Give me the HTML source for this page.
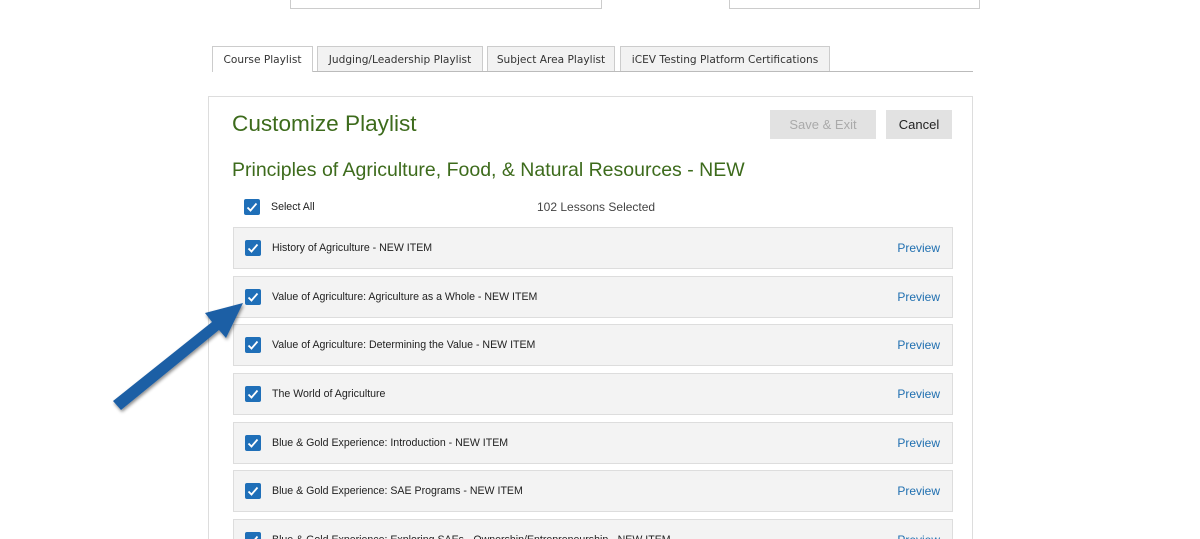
<!DOCTYPE html>
<html style="height:539px;overflow:hidden"><head><style>
body{margin:0;width:1200px;height:539px;overflow:hidden;background:#fff;font-family:"Liberation Sans",sans-serif;position:relative}
.a{position:absolute}
.tab{position:absolute;top:46px;height:25px;border:1px solid #ccc;border-bottom:none;background:#f2f2f2;font-family:"DejaVu Sans",sans-serif;font-size:10.6px;color:#333;line-height:26px;text-align:center;box-sizing:border-box}
.row{position:absolute;left:233px;width:720px;height:42px;background:#f3f3f3;border:1px solid #ddd;box-sizing:border-box}
.cb{position:absolute;left:11px;top:12px;width:16px;height:16px;background:#1f6fb8;border-radius:2px}
.row span{position:absolute;left:38px;top:14px;font-size:10.6px;color:#222}
.row b{position:absolute;right:12px;top:13px;font-weight:normal;font-size:12px;color:#1f6fb0}
</style></head><body>
<div class="a" style="left:290px;top:-2px;width:310px;height:9px;border:1px solid #ccc"></div>
<div class="a" style="left:729px;top:-2px;width:249px;height:9px;border:1px solid #ccc"></div>
<div class="a" style="left:212px;top:71px;width:761px;border-top:1px solid #bbb"></div>
<div class="tab" style="left:212px;width:101px;background:#fff;height:26px">Course Playlist</div>
<div class="tab" style="left:317px;width:166px">Judging/Leadership Playlist</div>
<div class="tab" style="left:487px;width:128px">Subject Area Playlist</div>
<div class="tab" style="left:620px;width:210px">iCEV Testing Platform Certifications</div>
<div class="a" style="left:208px;top:96px;width:765px;height:460px;border:1px solid #ddd;box-sizing:border-box"></div>
<div class="a" style="left:232px;top:111px;font-size:22.6px;color:#3d6b1c">Customize Playlist</div>
<div class="a" style="left:770px;top:110px;width:106px;height:29px;background:#e2e2e2;color:#aaa;font-size:13px;line-height:29px;text-align:center">Save &amp; Exit</div>
<div class="a" style="left:886px;top:110px;width:66px;height:29px;background:#e2e2e2;color:#222;font-size:13px;line-height:29px;text-align:center">Cancel</div>
<div class="a" style="left:232px;top:159px;font-size:19.5px;color:#3d6b1c">Principles of Agriculture, Food, &amp; Natural Resources - NEW</div>
<div class="a" style="left:244px;top:199px;width:16px;height:16px;background:#1f6fb8;border-radius:2px"><svg width="16" height="16"><path d="M3.5 8.5l3 3 6-7" stroke="#fff" stroke-width="1.8" fill="none"/></svg></div>
<div class="a" style="left:271px;top:201px;font-size:10.6px;color:#222">Select All</div>
<div class="a" style="left:537px;top:200px;font-size:12px;color:#444">102 Lessons Selected</div>
<div class="row" style="top:227px"><div class="cb"><svg width="16" height="16"><path d="M3.5 8.5l3 3 6-7" stroke="#fff" stroke-width="1.8" fill="none"/></svg></div><span>History of Agriculture - NEW ITEM</span><b>Preview</b></div>
<div class="row" style="top:276px"><div class="cb"><svg width="16" height="16"><path d="M3.5 8.5l3 3 6-7" stroke="#fff" stroke-width="1.8" fill="none"/></svg></div><span>Value of Agriculture: Agriculture as a Whole - NEW ITEM</span><b>Preview</b></div>
<div class="row" style="top:324px"><div class="cb"><svg width="16" height="16"><path d="M3.5 8.5l3 3 6-7" stroke="#fff" stroke-width="1.8" fill="none"/></svg></div><span>Value of Agriculture: Determining the Value - NEW ITEM</span><b>Preview</b></div>
<div class="row" style="top:373px"><div class="cb"><svg width="16" height="16"><path d="M3.5 8.5l3 3 6-7" stroke="#fff" stroke-width="1.8" fill="none"/></svg></div><span>The World of Agriculture</span><b>Preview</b></div>
<div class="row" style="top:422px"><div class="cb"><svg width="16" height="16"><path d="M3.5 8.5l3 3 6-7" stroke="#fff" stroke-width="1.8" fill="none"/></svg></div><span>Blue &amp; Gold Experience: Introduction - NEW ITEM</span><b>Preview</b></div>
<div class="row" style="top:470px"><div class="cb"><svg width="16" height="16"><path d="M3.5 8.5l3 3 6-7" stroke="#fff" stroke-width="1.8" fill="none"/></svg></div><span>Blue &amp; Gold Experience: SAE Programs - NEW ITEM</span><b>Preview</b></div>
<div class="row" style="top:519px"><div class="cb"><svg width="16" height="16"><path d="M3.5 8.5l3 3 6-7" stroke="#fff" stroke-width="1.8" fill="none"/></svg></div><span>Blue &amp; Gold Experience: Exploring SAEs - Ownership/Entrepreneurship - NEW ITEM</span><b>Preview</b></div>
<svg class="a" style="left:0;top:0" width="1200" height="539">
<defs><filter id="s"><feDropShadow dx="1" dy="2" stdDeviation="1.5" flood-color="#000" flood-opacity="0.45"/></filter></defs>
<g filter="url(#s)" fill="#1c5fa5">
<path d="M113 401 L212 322 L205 313 L243 303 L226 338 L219 330 L121 410 Z"/>
</g>
</svg>
</body></html>
